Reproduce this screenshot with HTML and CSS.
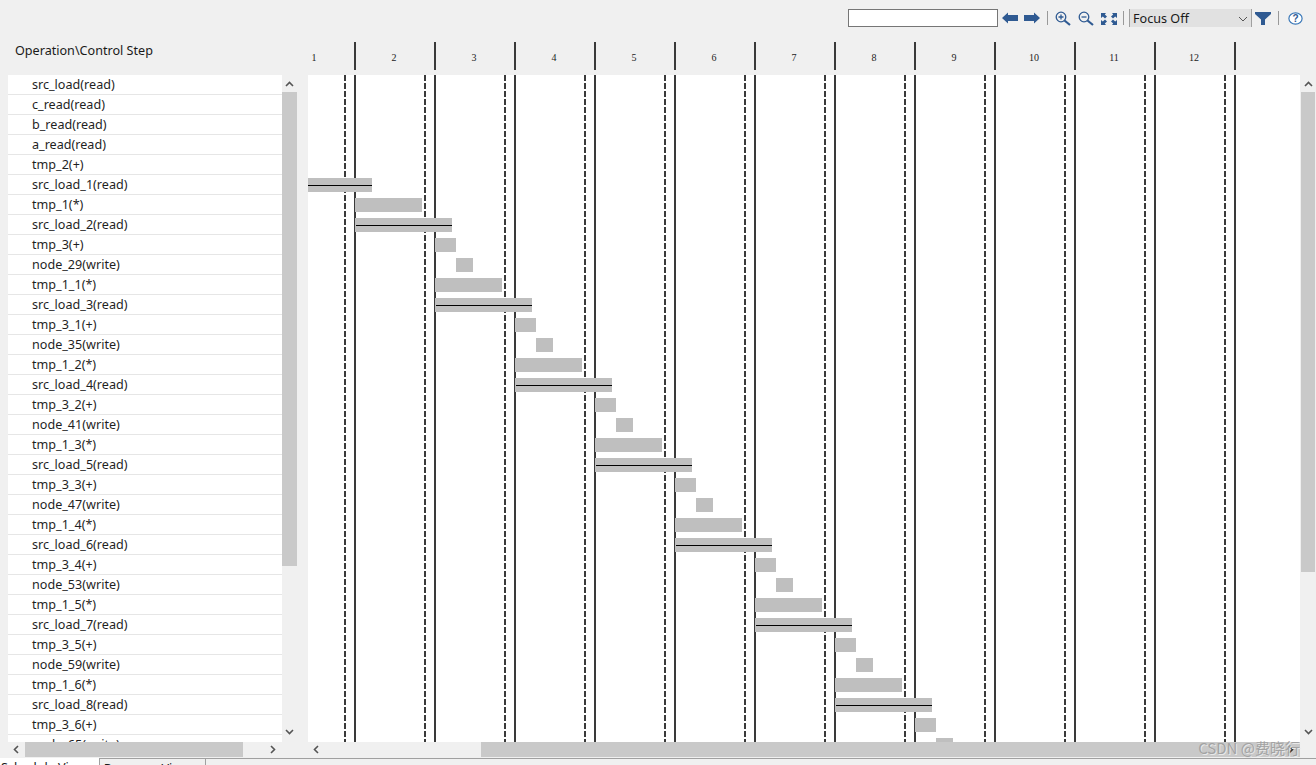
FILE: index.html
```html
<!DOCTYPE html>
<html lang="en">
<head>
<meta charset="utf-8">
<title>Schedule Viewer</title>
<link rel="stylesheet" href="styles.css">
</head>
<body>
<div class="app">
  <div class="toolbar">
    <input class="search" type="text">
    <svg class="ico ico-arrow" viewBox="0 0 16 12"><path d="M0 6 6 .5V3H16V9H6V11.500Z"/></svg>
    <svg class="ico ico-arrow ico-next" viewBox="0 0 16 12"><path d="M16 6 10 .5V3H0V9H10V11.500Z"/></svg>
    <span class="sep sep-a"></span>
    <svg class="ico ico-zoom" viewBox="0 0 16 15"><circle cx="6" cy="6" r="4.800" fill="none" stroke-width="1.300"/><path class="thick" d="M9.500 9.500 15 14"/><path class="thin" d="M3.500 6H8.500M6 3.500V8.500"/></svg>
    <svg class="ico ico-zoom ico-out" viewBox="0 0 16 15"><circle cx="6" cy="6" r="4.800" fill="none" stroke-width="1.300"/><path class="thick" d="M9.500 9.500 15 14"/><path class="thin" d="M3.500 6H8.500"/></svg>
    <svg class="ico ico-fit" viewBox="0 0 16 12"><path d="M0 0H5L3.800 1.600 6 3.600 4 5.400 1.800 3.400 0 5ZM16 0H11L12.200 1.600 10 3.600 12 5.400 14.200 3.400 16 5ZM0 12H5L3.800 10.400 6 8.400 4 6.600 1.800 8.600 0 7ZM16 12H11L12.200 10.400 10 8.400 12 6.600 14.200 8.600 16 7Z"/></svg>
    <span class="sep sep-b"></span>
    <div class="select">
      <span>Focus Off</span>
      <svg class="chev" viewBox="0 0 10 6"><path d="M1 1 5 5 9 1"/></svg>
    </div>
    <svg class="ico ico-filter" viewBox="0 0 16 13"><path d="M0 0H16V2L10 7.500V13H6V7.500L0 2Z"/></svg>
    <span class="sep sep-c"></span>
    <svg class="ico-help" viewBox="0 0 15 13"><ellipse cx="7.500" cy="6.500" rx="6.600" ry="5.600"/><text x="7.500" y="10" text-anchor="middle">?</text></svg>
  </div>

  <div class="heads">
    <div class="op-head">Operation\Control Step</div>
    <div class="steps">
      <div class="step step-first">1</div>
      <div class="step">2</div>
      <div class="step">3</div>
      <div class="step">4</div>
      <div class="step">5</div>
      <div class="step">6</div>
      <div class="step">7</div>
      <div class="step">8</div>
      <div class="step">9</div>
      <div class="step">10</div>
      <div class="step">11</div>
      <div class="step">12</div>
    </div>
  </div>

  <div class="main">
    <div class="left">
      <div class="list-wrap">
        <ul class="ops">
          <li>src_load(read)</li>
          <li>c_read(read)</li>
          <li>b_read(read)</li>
          <li>a_read(read)</li>
          <li>tmp_2(+)</li>
          <li>src_load_1(read)</li>
          <li>tmp_1(*)</li>
          <li>src_load_2(read)</li>
          <li>tmp_3(+)</li>
          <li>node_29(write)</li>
          <li>tmp_1_1(*)</li>
          <li>src_load_3(read)</li>
          <li>tmp_3_1(+)</li>
          <li>node_35(write)</li>
          <li>tmp_1_2(*)</li>
          <li>src_load_4(read)</li>
          <li>tmp_3_2(+)</li>
          <li>node_41(write)</li>
          <li>tmp_1_3(*)</li>
          <li>src_load_5(read)</li>
          <li>tmp_3_3(+)</li>
          <li>node_47(write)</li>
          <li>tmp_1_4(*)</li>
          <li>src_load_6(read)</li>
          <li>tmp_3_4(+)</li>
          <li>node_53(write)</li>
          <li>tmp_1_5(*)</li>
          <li>src_load_7(read)</li>
          <li>tmp_3_5(+)</li>
          <li>node_59(write)</li>
          <li>tmp_1_6(*)</li>
          <li>src_load_8(read)</li>
          <li>tmp_3_6(+)</li>
          <li>node_65(write)</li>
        </ul>
        <div class="vbar vbar-left">
          <svg class="arr" viewBox="0 0 9 6"><path d="M1 5 4.500 1.500 8 5"/></svg>
          <div class="vthumb vthumb-left"></div>
          <svg class="arr arr-down" viewBox="0 0 9 6"><path d="M1 1 4.500 4.500 8 1"/></svg>
        </div>
      </div>
      <div class="hbar hbar-left">
        <svg class="arr-h" viewBox="0 0 6 9"><path d="M5 1 1.500 4.500 5 8"/></svg>
        <div class="hthumb hthumb-left"></div>
        <svg class="arr-h" viewBox="0 0 6 9"><path d="M1 1 4.500 4.500 1 8"/></svg>
      </div>
    </div>

    <div class="right">
      <div class="chart-wrap">
        <div class="chart">
          <div class="cols">
            <div class="col col-first"></div>
            <div class="col"></div><div class="col"></div><div class="col"></div>
            <div class="col"></div><div class="col"></div><div class="col"></div>
            <div class="col"></div><div class="col"></div><div class="col"></div>
            <div class="col"></div><div class="col"></div>
          </div>
          <div class="rows">
            <div class="row"></div><div class="row"></div><div class="row"></div><div class="row"></div><div class="row"></div>
            <div class="row"><div class="bar line line-edge" style="margin-left:0;width:64px"></div></div>
            <div class="row"><div class="bar" style="margin-left:47px;width:67px"></div></div>
            <div class="row"><div class="bar line" style="margin-left:47px;width:97px"></div></div>
            <div class="row"><div class="bar" style="margin-left:127px;width:21px"></div></div>
            <div class="row"><div class="bar" style="margin-left:148px;width:17px"></div></div>
            <div class="row"><div class="bar" style="margin-left:127px;width:67px"></div></div>
            <div class="row"><div class="bar line" style="margin-left:127px;width:97px"></div></div>
            <div class="row"><div class="bar" style="margin-left:207px;width:21px"></div></div>
            <div class="row"><div class="bar" style="margin-left:228px;width:17px"></div></div>
            <div class="row"><div class="bar" style="margin-left:207px;width:67px"></div></div>
            <div class="row"><div class="bar line" style="margin-left:207px;width:97px"></div></div>
            <div class="row"><div class="bar" style="margin-left:287px;width:21px"></div></div>
            <div class="row"><div class="bar" style="margin-left:308px;width:17px"></div></div>
            <div class="row"><div class="bar" style="margin-left:287px;width:67px"></div></div>
            <div class="row"><div class="bar line" style="margin-left:287px;width:97px"></div></div>
            <div class="row"><div class="bar" style="margin-left:367px;width:21px"></div></div>
            <div class="row"><div class="bar" style="margin-left:388px;width:17px"></div></div>
            <div class="row"><div class="bar" style="margin-left:367px;width:67px"></div></div>
            <div class="row"><div class="bar line" style="margin-left:367px;width:97px"></div></div>
            <div class="row"><div class="bar" style="margin-left:447px;width:21px"></div></div>
            <div class="row"><div class="bar" style="margin-left:468px;width:17px"></div></div>
            <div class="row"><div class="bar" style="margin-left:447px;width:67px"></div></div>
            <div class="row"><div class="bar line" style="margin-left:447px;width:97px"></div></div>
            <div class="row"><div class="bar" style="margin-left:527px;width:21px"></div></div>
            <div class="row"><div class="bar" style="margin-left:548px;width:17px"></div></div>
            <div class="row"><div class="bar" style="margin-left:527px;width:67px"></div></div>
            <div class="row"><div class="bar line" style="margin-left:527px;width:97px"></div></div>
            <div class="row"><div class="bar" style="margin-left:607px;width:21px"></div></div>
            <div class="row"><div class="bar" style="margin-left:628px;width:17px"></div></div>
          </div>
        </div>
        <div class="vbar vbar-right">
          <svg class="arr" viewBox="0 0 9 6"><path d="M1 5 4.500 1.500 8 5"/></svg>
          <div class="vthumb vthumb-right"></div>
          <svg class="arr arr-down" viewBox="0 0 9 6"><path d="M1 1 4.500 4.500 8 1"/></svg>
        </div>
      </div>
      <div class="hbar hbar-right">
        <svg class="arr-h" viewBox="0 0 6 9"><path d="M5 1 1.500 4.500 5 8"/></svg>
        <div class="hthumb hthumb-right"></div>
        <svg class="arr-h arr-over" viewBox="0 0 6 9"><path d="M1 1 4.500 4.500 1 8"/></svg>
        <span class="mark">CSDN @费晓行</span>
      </div>
    </div>
  </div>

  <div class="tabs">
    <div class="tab tab-active">Schedule Viewer</div>
    <div class="tab">Resource Viewer</div>
  </div>
</div>
</body>
</html>
```

FILE: styles.css
```css
* { box-sizing: border-box; }
html, body { margin: 0; padding: 0; height: 100%; overflow: hidden; background: #f0f0f0; }
body { font-family: "Noto Sans", sans-serif; font-size: 12.6px; color: #1a1a1a; }
.app { width: 1316px; height: 765px; display: flex; flex-direction: column; overflow: hidden; }

/* toolbar */
.toolbar { height: 42px; flex: none; display: flex; align-items: flex-start; padding: 9px 0 0 848px; }
.search { width: 150px; height: 18px; border: 1px solid #767676; background: #fff; padding: 0; margin: 0 4px 0 0; outline: 0; }
.ico { flex: none; fill: #2f5a92; stroke: none; }
.ico-arrow { width: 16px; height: 12px; margin: 3px 0 0; }
.ico-next { margin-left: 6px; }
.sep { flex: none; width: 1px; height: 14px; margin-top: 2px; background: #999; }
.sep-a { margin-left: 7px; }
.ico-zoom { width: 16px; height: 15px; margin: 2px 0 0 7px; stroke: #2f5a92; fill: none; }
.ico-out { margin-left: 7px; }
.thick { stroke-width: 2.2; }
.thin { stroke-width: 1.3; }
.ico-fit { width: 16px; height: 12px; margin: 4px 0 0 7px; }
.sep-b { margin-left: 6px; }
.select { flex: none; width: 123px; height: 18px; margin-left: 5px; background: #e1e1e1; border-left: 1px solid #a0a0a0; border-right: 1px solid #a0a0a0; display: flex; align-items: center; justify-content: space-between; padding: 1px 3px 0; font-size: 12.6px; line-height: 17px; }
.chev { width: 10px; height: 6px; fill: none; stroke: #555; stroke-width: 1; }
.ico-filter { width: 16px; height: 13px; margin: 3px 0 0 3px; }
.sep-c { margin-left: 7px; }
.ico-help { flex: none; width: 15px; height: 13px; margin: 3px 0 0 9px; }
.ico-help ellipse { fill: #fff; stroke: #3a78b8; stroke-width: 1.2; }
.ico-help text { font-family: "Liberation Sans", sans-serif; font-weight: 700; font-size: 10px; fill: #2f5a92; }

/* headers */
.heads { height: 33px; flex: none; display: flex; }
.op-head { width: 308px; padding-left: 15px; line-height: 18px; }
.steps { display: flex; height: 28px; }
.step { width: 80px; height: 28px; border-right: 2px solid #3a3a3a; padding: 9px 2px 0 0; text-align: center; font-family: "Liberation Serif", serif; font-size: 10px; line-height: 14px; color: #222; }
.step-first { width: 48px; padding-right: 34px; }

/* main */
.main { flex: none; height: 682px; display: flex; }
.left { width: 297px; margin-left: 8px; flex: none; }
.list-wrap { height: 667px; display: flex; }
.ops { list-style: none; margin: 0; padding: 0; width: 274px; height: 667px; overflow: hidden; background: #fff; }
.ops li { height: 20px; padding-left: 24px; border-bottom: 1px solid #e6e6e6; line-height: 20px; color: #1f1f1f; white-space: nowrap; }
.vbar { flex: none; display: flex; flex-direction: column; align-items: center; background: #f0f0f0; }
.vbar-left { width: 15px; }
.vbar-right { width: 16px; }
.arr { width: 9px; height: 6px; margin-top: 6px; margin-bottom: 5px; fill: none; stroke: #555; stroke-width: 1.6; flex: none; }
.arr-down { margin: auto 0 7px; }
.vthumb { background: #c9c9c9; flex: none; }
.vthumb-left { width: 15px; height: 474px; }
.vthumb-right { width: 14px; height: 480px; }
.hbar { height: 15px; display: flex; align-items: center; background: #f0f0f0; position: relative; }
.hbar-left { width: 274px; padding: 0 5px; }
.hbar-left .arr-h:last-child { margin-left: 27px; }
.hthumb-left { width: 218px; height: 15px; margin-left: 6px; }
.hbar-right { padding-left: 5px; }
.arr-h { width: 6px; height: 9px; fill: none; stroke: #555; stroke-width: 1.6; flex: none; }
.hthumb { background: #c9c9c9; flex: none; }
.hthumb-right { width: 819px; height: 15px; margin-left: 162px; }
.arr-over { margin-left: -12px; stroke: #333; }
.mark { position: absolute; right: 16px; top: -3px; font-family: "Noto Sans CJK SC", sans-serif; font-size: 15px; line-height: 18px; color: #a3a3a3; text-shadow: 1px 1px 0 #e8e8e8; white-space: nowrap; }

/* chart */
.right { width: 1008px; margin-left: 3px; flex: none; }
.chart-wrap { height: 667px; display: flex; }
.chart { width: 992px; height: 667px; background: #fff; position: relative; overflow: hidden; }
.cols { position: absolute; left: 0; top: 0; bottom: 0; display: flex; }
.col { width: 80px; height: 667px; border-right: 2px solid #3a3a3a; position: relative; }
.col-first { width: 48px; }
.col::before { content: ""; position: absolute; top: 0; bottom: 0; right: 8px; width: 2px; background: repeating-linear-gradient(to bottom, #3a3a3a 0 6px, transparent 6px 8px); }
.rows { position: relative; }
.row { height: 20px; padding-top: 3px; }
.bar { height: 14px; background: #bfbfbf; position: relative; }
.line::after { content: ""; position: absolute; left: 1px; right: 0; top: 7px; height: 1px; background: #000; }
.line-edge::after { left: 0; }

/* tabs */
.tabs { height: 7px; flex: none; display: flex; margin-top: 1px; border-top: 1px solid #a0a0a0; }
.tab { height: 20px; line-height: 18px; padding: 1px 0 0; width: 106px; border-right: 1px solid #a0a0a0; white-space: nowrap; text-align: center; }
.tab-active { width: 100px; background: #fff; margin-top: -1px; }
```
